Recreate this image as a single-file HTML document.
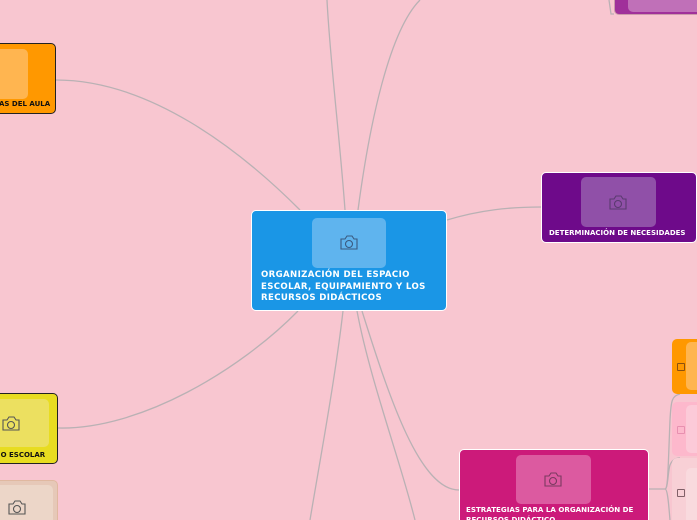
<!DOCTYPE html>
<html><head><meta charset="utf-8"><style>
html,body{margin:0;width:697px;height:520px;overflow:hidden}
body{background:#f8c6d0;position:relative;font-family:"DejaVu Sans","Liberation Sans",sans-serif}
.n{position:absolute;box-sizing:border-box;border-radius:5px}
.im{position:absolute;border-radius:5px}
.t{position:absolute;font-weight:bold;font-size:7.5px;line-height:11px;white-space:nowrap}
svg{position:absolute;left:0;top:0}
</style></head><body>
<svg width="697" height="520" fill="none" stroke="#b9b1b4" stroke-width="1.3">
<path d="M345 210 C340 140 330 60 327 0"/>
<path d="M358 210 C370 120 390 30 420 0"/>
<path d="M300 210 C240 150 150 80 56 80"/>
<path d="M447 220 C480 210 510 207 541 207"/>
<path d="M298 311 C240 370 140 430 58 428"/>
<path d="M343 311 C335 380 320 460 310 520"/>
<path d="M357 311 C370 380 400 460 415 520"/>
<path d="M362 311 C390 400 420 490 459 490"/>
<path d="M649 489 L665 489 C668 489 668 470 670 420 C671 400 672 396 680 394"/>
<path d="M665 489 C668 489 668 470 670 465 C672 460 675 458 680 458"/>
<path d="M665 489 C668 489 669 510 670 520"/>
<path d="M614 14 L611 14 L609 0"/>
</svg>
<div class="n" style="left:614px;top:-10px;width:90px;height:25px;background:#a0309a;border:1px solid #c9a"></div>
<div class="im" style="left:628px;top:-8px;width:80px;height:20px;background:#c070b8"></div>
<div class="n" style="left:251px;top:210px;width:196px;height:101px;background:#1a96e6;border:1.5px solid #fff"></div>
<div class="im" style="left:312px;top:218px;width:74px;height:50px;background:#5fb4ee"></div>
<div class="t" style="left:261px;top:270px;color:#fff;font-size:8.6px;line-height:11.5px;letter-spacing:0.35px">ORGANIZACIÓN DEL ESPACIO<br>ESCOLAR, EQUIPAMIENTO Y LOS<br>RECURSOS DIDÁCTICOS</div>
<div class="n" style="left:541px;top:172px;width:156px;height:71px;background:#6e0a8a;border:1px solid #fff"></div>
<div class="im" style="left:581px;top:177px;width:75px;height:50px;background:#9050a8"></div>
<div class="t" style="left:549px;top:228px;color:#fff;font-size:7px">DETERMINACIÓN DE NECESIDADES</div>
<div class="n" style="left:459px;top:449px;width:190px;height:80px;background:#cc1a7a;border:1px solid #fff"></div>
<div class="im" style="left:516px;top:455px;width:75px;height:49px;background:#dc5aa0"></div>
<div class="t" style="left:466px;top:505px;color:#fff;font-size:7.1px;line-height:10px">ESTRATEGIAS PARA LA ORGANIZACIÓN DE<br>RECURSOS DIDÁCTICO</div>
<div class="n" style="left:-20px;top:43px;width:76px;height:71px;background:#ff9800;border:1px solid #222"></div>
<div class="im" style="left:-20px;top:49px;width:48px;height:50px;background:#ffb550"></div>
<div class="t" style="left:-1px;top:99px;color:#111;font-size:7px">AS DEL AULA</div>
<div class="n" style="left:-20px;top:393px;width:78px;height:71px;background:#e8dc20;border:1px solid #222"></div>
<div class="im" style="left:-20px;top:399px;width:69px;height:48px;background:#ece060"></div>
<div class="t" style="left:-2px;top:450px;color:#111;font-size:7px">IO ESCOLAR</div>
<div class="n" style="left:-20px;top:480px;width:78px;height:60px;background:#e6c8b8;border:1px solid #e0b8a0"></div>
<div class="im" style="left:-20px;top:485px;width:73px;height:50px;background:#ecd6c8"></div>
<div class="n" style="left:672px;top:339px;width:40px;height:55px;background:#ff9800"></div>
<div class="im" style="left:686px;top:342px;width:20px;height:48px;background:#ffb550"></div>
<div class="n" style="left:672px;top:402px;width:40px;height:54px;background:#fdb8cc"></div>
<div class="im" style="left:686px;top:405px;width:20px;height:48px;background:#fccad8"></div>
<div class="n" style="left:672px;top:458px;width:40px;height:70px;background:#f8d0d6"></div>
<div class="im" style="left:686px;top:468px;width:20px;height:60px;background:#f9dade"></div>
<div style="position:absolute;left:677px;top:363px;width:6px;height:6px;border:1px solid #8a5010;border-radius:1px"></div>
<div style="position:absolute;left:677px;top:426px;width:6px;height:6px;border:1px solid #e890b0;border-radius:1px"></div>
<div style="position:absolute;left:677px;top:489px;width:6px;height:6px;border:1px solid #806068;border-radius:1px"></div>
<svg width="697" height="520" fill="none" stroke="#555" stroke-width="1.1">
<defs><g id="c"><path d="M-8 -4 h4 l2 -3 h5 l2 3 h3 v10 h-16 z"/><circle cx="0" cy="1" r="3.5"/></g></defs>
<use href="#c" x="349" y="243" stroke="#3a5a80"/>
<use href="#c" x="618" y="203" stroke="#5a3a70"/>
<use href="#c" x="553" y="480" stroke="#7a3a60"/>
<use href="#c" x="11" y="424" stroke="#555"/>
<use href="#c" x="17" y="508" stroke="#555"/>
</svg>
</body></html>
